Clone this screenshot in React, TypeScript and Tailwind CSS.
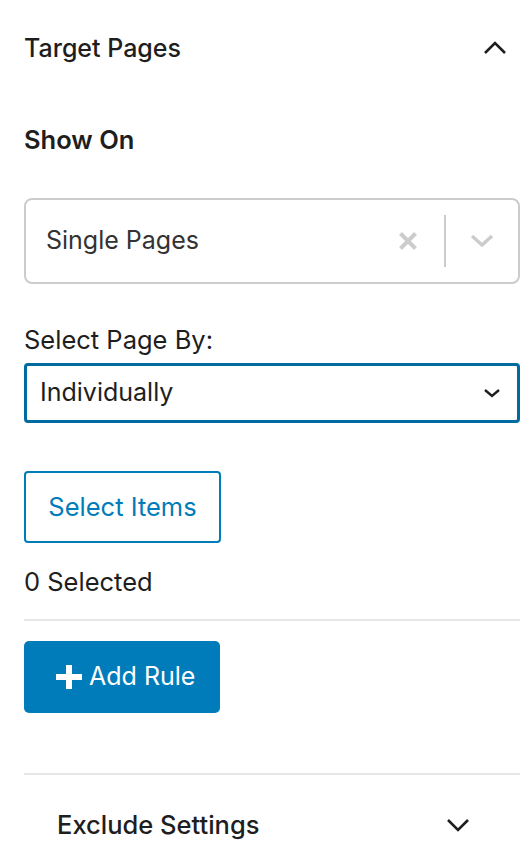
import React from "react";

const font = { fontFamily: "Inter, 'Noto Sans', sans-serif" };

export default function App() {
  return (
    <div className="w-[530px] h-[865px] bg-white overflow-hidden text-[#1e1e1e]" style={font}>
      <div className="pl-[24px] pr-[10px]">
        {/* header */}
        <div className="mt-[32px] h-[32px] flex items-center justify-between">
          <span className="text-[25px] leading-[32px] font-medium">Target Pages</span>
          <svg width="24" height="14" viewBox="0 0 24 14" className="mr-[13px]">
            <path d="M2 12 L12 2 L22 12" fill="none" stroke="#1e1e1e" strokeWidth="2.6" />
          </svg>
        </div>

        <div className="mt-[60px] text-[25.5px] leading-[32px] font-semibold">Show On</div>

        {/* react-select */}
        <div className="mt-[42px] h-[86px] border-2 border-[#cccccc] rounded-[8px] flex items-center">
          <span className="flex-1 pl-[20px] text-[25px] text-[#333333]">Single Pages</span>
          <div className="w-[40px] flex items-center justify-center">
            <svg width="20" height="20" viewBox="0 0 20 20">
              <path d="M2.5 2.5 L17.5 17.5 M17.5 2.5 L2.5 17.5" stroke="#cccccc" strokeWidth="4" strokeLinecap="butt" />
            </svg>
          </div>
          <div className="w-[2px] h-[52px] bg-[#cccccc] ml-[16px]" />
          <div className="w-[72px] flex items-center justify-center">
            <svg width="24" height="14" viewBox="0 0 24 14">
              <path d="M2 2 L12 11 L22 2" fill="none" stroke="#cccccc" strokeWidth="3.5" />
            </svg>
          </div>
        </div>

        <div className="mt-[40px] text-[25.5px] leading-[32px]">Select Page By:</div>

        <div className="mt-[7px] h-[60px] border-[3px] border-[#006ba1] rounded-[4px] flex items-center justify-between pl-[13px] pr-[16px]">
          <span className="text-[25px] text-[#1e1e1e]">Individually</span>
          <svg width="18" height="10" viewBox="0 0 18 10">
            <path d="M2 2 L9 8 L16 2" fill="none" stroke="#1e1e1e" strokeWidth="2.4" />
          </svg>
        </div>

        <div className="mt-[48px]">
          <button className="h-[72px] w-[197px] border-2 border-[#007cba] rounded-[4px] text-[#007cba] text-[25.5px] flex items-center justify-center">
            Select Items
          </button>
        </div>

        <div className="mt-[23px] text-[25.5px] leading-[32px]">0 Selected</div>

        <div className="mt-[21px] h-[2px] bg-[#e6e6e6]" />

        <div className="mt-[20px]">
          <button className="h-[72px] w-[196px] bg-[#007cba] rounded-[5px] text-white text-[25px] flex items-center pl-[32px]">
            <svg width="26" height="24" viewBox="0 0 26 24" className="mr-[7px]">
              <path d="M13 0 V24 M0 12 H26" stroke="#ffffff" strokeWidth="6" />
            </svg>
            Add Rule
          </button>
        </div>

        <div className="mt-[60px] h-[2px] bg-[#e6e6e6]" />

        <div className="mt-[34px] h-[32px] flex items-center justify-between pl-[33px] pr-[50px]">
          <span className="text-[25.5px] leading-[32px] font-medium">Exclude Settings</span>
          <svg width="24" height="14" viewBox="0 0 24 14">
            <path d="M2 2 L12 12 L22 2" fill="none" stroke="#1e1e1e" strokeWidth="2.6" />
          </svg>
        </div>
      </div>
    </div>
  );
}
